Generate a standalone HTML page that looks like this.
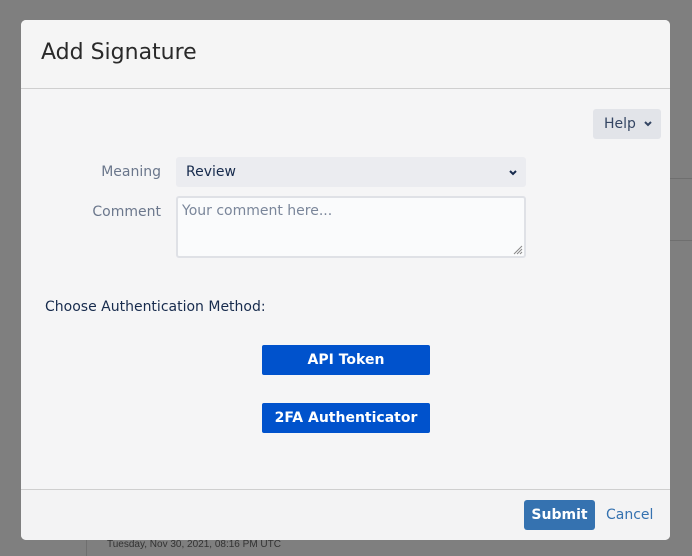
<!DOCTYPE html>
<html><head><style>
*{box-sizing:border-box;margin:0;padding:0}
body{width:692px;height:556px;background:#7f7f7f;font-family:"DejaVu Sans","Liberation Sans",sans-serif;position:relative;overflow:hidden}
.bgl{position:absolute;background:#6f6f6f}
.modal{position:absolute;left:21px;top:20px;width:649px;height:520px;background:#f5f5f6;border-radius:5px;overflow:hidden}
.hd{height:69px;border-bottom:1px solid #cfcfcf;padding:20px 20px;font-size:22px;color:#2a2a2a;background:#f5f5f5}
.help{position:absolute;left:572px;top:89px;width:68px;height:30px;background:#e2e4e9;border-radius:3px;font-size:14px;color:#344563;padding:7px 0 0 11px;white-space:nowrap}
.lbl{position:absolute;font-size:14px;color:#6b778c;text-align:right;width:140px;left:0}
.sel{position:absolute;left:155px;top:137px;width:350px;height:30px;background:#ebecf0;border-radius:3px;font-size:14px;color:#172b4d;padding:7px 10px}
.ta{position:absolute;left:155px;top:176px;width:350px;height:62px;background:#fafbfc;border:2px solid #dfe1e6;border-radius:3px;font-size:14px;color:#7a869a;padding:5px 4px}
.cam{position:absolute;left:24px;top:279px;font-size:14px;color:#172b4d}
.btn{position:absolute;left:241px;width:168px;height:30px;background:#0052cc;color:#fff;font-weight:bold;font-size:14px;text-align:center;line-height:31px;border-radius:2px}
.ft{position:absolute;left:0;top:469px;width:649px;height:51px;border-top:1px solid #cfcfcf;background:#f3f3f4}
.sub{position:absolute;left:503px;top:10px;width:71px;height:30px;background:#3572b0;border-radius:3px;color:#fff;font-weight:bold;font-size:14px;line-height:30px;text-align:center}
.can{position:absolute;left:585px;top:10px;line-height:30px;font-size:14px;color:#3572b0}
</style></head><body>
<div class="bgl" style="left:670px;top:178px;width:22px;height:1px"></div>
<div class="bgl" style="left:670px;top:240px;width:22px;height:1px"></div>
<div class="bgl" style="left:86px;top:540px;width:1px;height:16px"></div>
<div style="position:absolute;left:107px;top:539px;font-size:10px;color:#333;font-family:'Liberation Sans',sans-serif">Tuesday, Nov 30, 2021, 08:16 PM UTC</div>
<div class="modal">
<div class="hd">Add Signature</div>
<div class="help">Help<svg width="10" height="8" viewBox="0 0 10 8" style="position:absolute;left:50px;top:11px"><path d="M2 2l3 3 3-3" stroke="#344563" stroke-width="2" fill="none"/></svg></div>
<div class="lbl" style="top:144px">Meaning</div>
<div class="sel">Review<svg width="10" height="8" viewBox="0 0 10 8" style="position:absolute;right:8px;top:12px"><path d="M2 2l3 3 3-3" stroke="#172b4d" stroke-width="2" fill="none"/></svg></div>
<div class="lbl" style="top:184px">Comment</div>
<div class="ta">Your comment here...<svg width="10" height="10" viewBox="0 0 10 10" style="position:absolute;right:1px;bottom:1px"><path d="M9 1L1 9M9 4L4 9M9 7L7 9" stroke="#888" stroke-width="1"/></svg></div>
<div class="cam">Choose Authentication Method:</div>
<div class="btn" style="top:325px">API Token</div>
<div class="btn" style="top:383px">2FA Authenticator</div>
<div class="ft"><div class="sub">Submit</div><div class="can">Cancel</div></div>
</div>
</body></html>
